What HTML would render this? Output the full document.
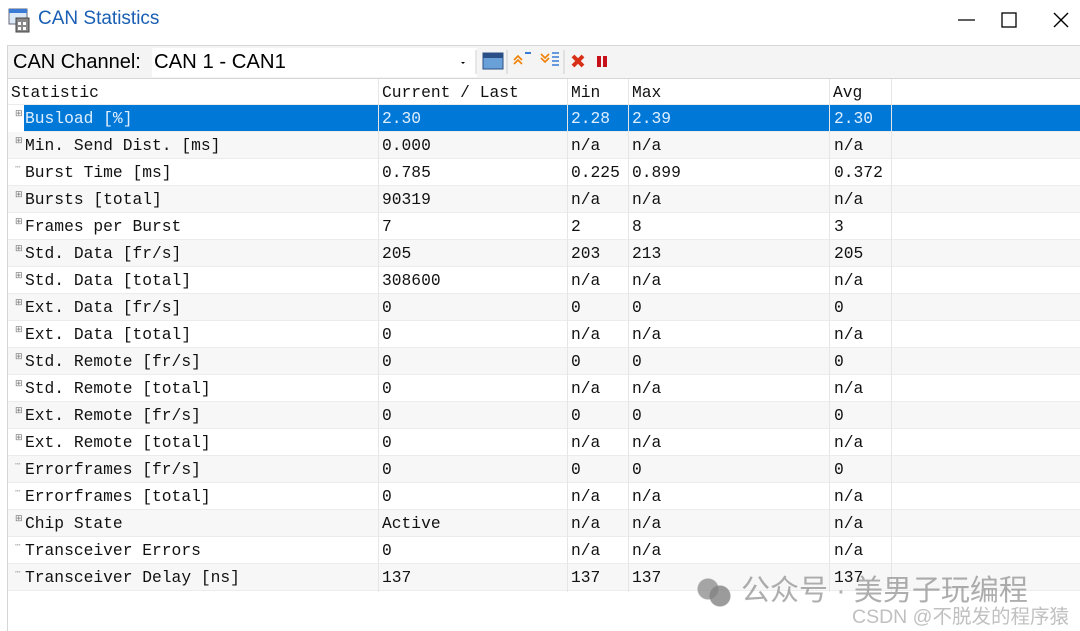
<!DOCTYPE html>
<html><head><meta charset="utf-8"><style>
*{margin:0;padding:0;box-sizing:border-box}
html,body{width:1080px;height:631px;overflow:hidden}
body{background:#fff;position:relative;font-family:"Liberation Sans","Noto Sans CJK SC",sans-serif}
.title{position:absolute;left:38px;top:8px;font-size:19px;color:#1a5fb4}
.tb{position:absolute;left:7px;top:45px;width:1073px;height:33px;background:#f4f4f4;border-top:1px solid #d6d6d6;border-left:1px solid #d6d6d6}
.lbl{position:absolute;left:5px;top:5px;font-size:20px;color:#000}
.combo{position:absolute;left:144px;top:2px;width:325px;height:29px;background:#fff}
.combo span{position:absolute;left:2px;top:3px;font-size:20.3px}
.grid{position:absolute;left:7px;top:78px;width:1073px;height:553px;border-left:1px solid #d6d6d6;border-top:1px solid #d6d6d6}
.row{position:absolute;left:0;width:1073px;height:27px;border-bottom:1px solid #ececec;font-family:"Liberation Mono",monospace;font-size:16.3px;color:#111}
.row.g{background:#f7f7f7}
.row.sel{background:#0078d7;color:#dfefff}
.c{position:absolute;top:4px;white-space:pre}
.vl{position:absolute;top:0;width:1px;height:513px;background:#e6e6e6}
.tree{position:absolute;left:7px;top:4px;width:9px;height:9px;font-size:9px;color:#777}
</style></head><body>
<svg style="position:absolute;left:8px;top:8px" width="28" height="26" viewBox="0 0 28 26">
<rect x="1" y="1" width="18" height="15" fill="#dbe8f5" stroke="#667" /><rect x="1" y="1" width="18" height="4" fill="#3a7bd5"/>
<rect x="8" y="10" width="13" height="14" fill="#888" stroke="#444"/><g fill="#fff"><rect x="10" y="14" width="3" height="3"/><rect x="15" y="14" width="3" height="3"/><rect x="10" y="19" width="3" height="3"/><rect x="15" y="19" width="3" height="3"/></g></svg>
<div class="title">CAN Statistics</div>
<svg style="position:absolute;left:955px;top:10px" width="120" height="22"><line x1="3" y1="10" x2="20" y2="10" stroke="#000" stroke-width="1.3"/><rect x="47" y="3" width="14" height="14" fill="none" stroke="#000" stroke-width="1.3"/><path d="M99 3L113 17M113 3L99 17" stroke="#000" stroke-width="1.4"/></svg>
<div class="tb"><div class="lbl">CAN Channel:</div><div class="combo"><span>CAN 1 - CAN1</span></div>
<svg style="position:absolute;left:450px;top:2px" width="180" height="28">
<path d="M3 14l4 0l-2 2z" fill="#000"/>
<line x1="18" y1="2" x2="18" y2="26" stroke="#ccc"/>
<rect x="25" y="5" width="20" height="16" fill="#6aa0d8" stroke="#2a4e86"/><rect x="25" y="5" width="20" height="5" fill="#2a4e86"/>
<line x1="49" y1="2" x2="49" y2="26" stroke="#ccc"/>
<path d="M56 12l4-4l4 4M56 16l4-4l4 4" stroke="#f08000" fill="none" stroke-width="1.6"/><line x1="67" y1="5" x2="73" y2="5" stroke="#3a7bd5" stroke-width="2"/>
<path d="M83 6l4 4l4-4M83 10l4 4l4-4" stroke="#f08000" fill="none" stroke-width="1.6"/><g stroke="#3a7bd5" stroke-width="1.5"><line x1="94" y1="5" x2="101" y2="5"/><line x1="94" y1="9" x2="101" y2="9"/><line x1="94" y1="13" x2="101" y2="13"/><line x1="94" y1="17" x2="101" y2="17"/></g>
<line x1="106" y1="2" x2="106" y2="26" stroke="#ccc"/>
<path d="M115 8l10 10M125 8l-10 10" stroke="#d83018" stroke-width="4"/>
<rect x="139" y="8" width="4" height="11" fill="#c8101a"/><rect x="145" y="8" width="4" height="11" fill="#c8101a"/>
</svg></div>
<div class="grid">
<div class="row" style="top:0;height:26px"><span class="c" style="left:3px">Statistic</span><span class="c" style="left:374px">Current / Last</span><span class="c" style="left:563px">Min</span><span class="c" style="left:624px">Max</span><span class="c" style="left:825px">Avg</span></div>
<div id="rows"></div>
<div class="vl" style="left:370px"></div><div class="vl" style="left:559px"></div><div class="vl" style="left:620px"></div><div class="vl" style="left:821px"></div><div class="vl" style="left:883px"></div>
</div>
<div style="position:absolute;left:697px;top:567px;font-size:29px;white-space:nowrap;color:rgba(120,120,120,.6)"><span style="display:inline-block;width:36px;height:30px;vertical-align:middle;background:radial-gradient(circle at 11px 12px,rgba(130,130,130,.7) 10px,transparent 11px),radial-gradient(circle at 23px 19px,rgba(130,130,130,.8) 10px,transparent 11px)"></span> 公众号 · 美男子玩编程</div>
<div style="position:absolute;left:852px;top:600px;font-size:19.5px;white-space:nowrap;color:rgba(150,150,150,.6)">CSDN @不脱发的程序猿</div>
<script>
var d=[["+","Busload [%]","2.30","2.28","2.39","2.30"],["+","Min. Send Dist. [ms]","0.000","n/a","n/a","n/a"],["-","Burst Time [ms]","0.785","0.225","0.899","0.372"],["+","Bursts [total]","90319","n/a","n/a","n/a"],["+","Frames per Burst","7","2","8","3"],["+","Std. Data [fr/s]","205","203","213","205"],["+","Std. Data [total]","308600","n/a","n/a","n/a"],["+","Ext. Data [fr/s]","0","0","0","0"],["+","Ext. Data [total]","0","n/a","n/a","n/a"],["+","Std. Remote [fr/s]","0","0","0","0"],["+","Std. Remote [total]","0","n/a","n/a","n/a"],["+","Ext. Remote [fr/s]","0","0","0","0"],["+","Ext. Remote [total]","0","n/a","n/a","n/a"],["-","Errorframes [fr/s]","0","0","0","0"],["-","Errorframes [total]","0","n/a","n/a","n/a"],["+","Chip State","Active","n/a","n/a","n/a"],["-","Transceiver Errors","0","n/a","n/a","n/a"],["-","Transceiver Delay [ns]","137","137","137","137"]];
var h="";d.forEach(function(r,i){var cls=i==0?"row sel":(i%2?"row g":"row");
h+='<div class="'+cls+'" style="top:'+(26+i*27)+'px">'+(i==0?'<div style="position:absolute;left:0;top:0;width:16px;height:27px;background:#fff"></div>':'')+'<span class="tree">'+(r[0]=="+"?"⊞":"┄")+'</span><span class="c" style="left:17px">'+r[1]+'</span><span class="c" style="left:374px">'+r[2]+'</span><span class="c" style="left:563px">'+r[3]+'</span><span class="c" style="left:624px">'+r[4]+'</span><span class="c" style="left:826px">'+r[5]+'</span></div>';});
document.getElementById("rows").outerHTML=h;
</script>
</body></html>
